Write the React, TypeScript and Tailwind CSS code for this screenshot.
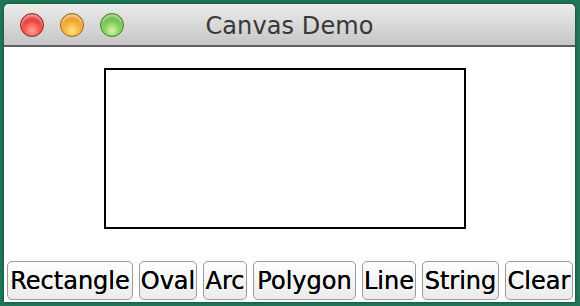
export default function App() {
  const buttons = [
    { label: 'Rectangle', w: 'w-[126px]' },
    { label: 'Oval', w: 'w-[58px]' },
    { label: 'Arc', w: 'w-[44px]' },
    { label: 'Polygon', w: 'w-[103px]' },
    { label: 'Line', w: 'w-[54px]' },
    { label: 'String', w: 'w-[77px]' },
    { label: 'Clear', w: 'w-[68px]' },
  ]

  return (
    <div className="w-[580px] h-[306px] bg-[#1f7656] pt-[4px] pl-[4px] overflow-hidden">
      <div className="w-[571px] h-[298px] flex flex-col bg-white rounded-t-[5px] overflow-hidden shadow-[0_0_3px_rgba(0,0,0,0.5)]">
        {/* title bar */}
        <div className="relative h-[41px] shrink-0 flex items-center justify-center bg-gradient-to-b from-[#ececec] to-[#c6c6c6]">
          <div className="absolute left-[16px] top-[9px] flex gap-[16px]">
            <span className="w-[24px] h-[24px] rounded-full border border-[#8e2420] bg-[radial-gradient(circle_at_50%_75%,#ffa29a_0%,#f0443c_50%,#b01c16_100%)] shadow-[inset_0_3px_3px_rgba(255,255,255,0.55)]" />
            <span className="w-[24px] h-[24px] rounded-full border border-[#9a6414] bg-[radial-gradient(circle_at_50%_75%,#ffe28c_0%,#f6a828_50%,#c07210_100%)] shadow-[inset_0_3px_3px_rgba(255,255,255,0.55)]" />
            <span className="w-[24px] h-[24px] rounded-full border border-[#3f7e28] bg-[radial-gradient(circle_at_50%_75%,#d6f7ae_0%,#78c84c_50%,#3a8a22_100%)] shadow-[inset_0_3px_3px_rgba(255,255,255,0.55)]" />
          </div>
          <span className="text-[24px] leading-none text-[#383838] font-['DejaVu_Sans',sans-serif] mt-[2px] tracking-[0.1px]">
            Canvas Demo
          </span>
        </div>
        <div className="h-[2px] shrink-0 bg-[#5e5e5e]" />

        {/* canvas */}
        <div className="flex-1 flex flex-col">
          <div className="mt-[21px] ml-[100px] w-[362px] h-[161px] border-2 border-black" />
          <div className="mt-auto mb-[2px] ml-[3px] flex gap-[6px]">
            {buttons.map(b => (
              <button
                key={b.label}
                className={`${b.w} h-[39px] flex items-center justify-center rounded-[5px] border border-[#9a9a9a] bg-gradient-to-b from-[#ffffff] to-[#ebebeb] text-[24px] leading-none text-black font-['DejaVu_Sans',sans-serif] [text-shadow:0_0_0.4px_#000]`}
              >
                {b.label}
              </button>
            ))}
          </div>
        </div>
      </div>
    </div>
  )
}
